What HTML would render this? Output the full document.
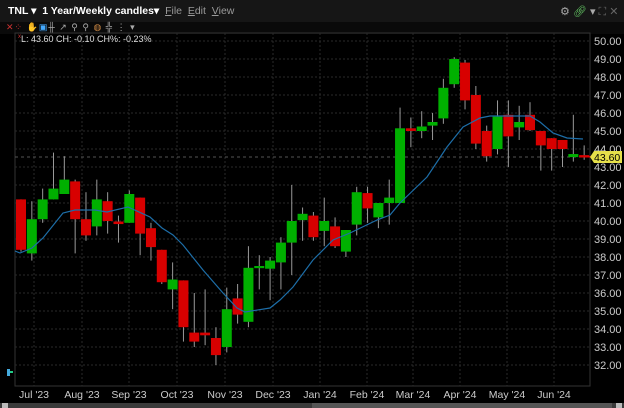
<!DOCTYPE html>
<html><head><meta charset="utf-8"><style>
html,body{margin:0;padding:0;background:#000;width:624px;height:408px;overflow:hidden;font-family:"Liberation Sans",sans-serif}
#top{position:absolute;left:0;top:0;width:624px;height:22px;background:#161616}
#tb{position:absolute;left:0;top:22px;width:624px;height:12px;background:#0a0a0a}
.t{position:absolute;white-space:nowrap}
</style></head><body>
<div id="top"></div><div id="tb"></div>
<div class="t" style="left:8px;top:5px;color:#fff;font-weight:bold;font-size:10.5px">TNL ▾&nbsp;&nbsp;1 Year/Weekly candles▾<span style="font-weight:normal;color:#9a9a9a;">&nbsp;&nbsp;<u>F</u>ile&nbsp;&nbsp;<u>E</u>dit&nbsp;&nbsp;<u>V</u>iew</span></div>
<div class="t" style="left:560px;top:5px;color:#aaa;font-size:11px">⚙ <span style="color:#6c6">🔗︎</span> ▾ <span style="color:#666">⛶ ✕</span></div>
<div class="t" style="left:6px;top:22px;font-size:9px;color:#aaa;letter-spacing:1px"><span style="color:#c33">✕</span><span style="color:#c33">⁘</span> ✋<span style="color:#4af">▣</span>╫ ↗ ⚲ ⚲ <span style="color:#c84">◍</span> ╬ ⋮ ▾</div>
<svg id="s" width="624" height="408" style="position:absolute;left:0;top:0"></svg>
<div class="t" style="left:18px;top:34px;font-size:9px;color:#ddd"><span style="color:#c33;font-size:6px;vertical-align:top">x</span>L: 43.60 CH: -0.10 CH%: -0.23%</div>
<script>
var s=document.getElementById('s'),h='';
function Y(p){return 59+(49-p)*18;}
h+='<rect x="15" y="33" width="575" height="353" fill="none" stroke="#333"/>';
for(var p=32;p<=50;p++){var y=Y(p);h+='<line x1="15" x2="590" y1="'+y+'" y2="'+y+'" stroke="#2a2a2a" stroke-dasharray="2,2"/>';h+='<text x="594" y="'+(y+4)+'" fill="#ccc" font-size="11" font-family="Liberation Sans">'+p+'.00</text>';}
var vx=[34,82,129,177,225,273,320,367,413,460,507,554];
var ml=["Jul '23","Aug '23","Sep '23","Oct '23","Nov '23","Dec '23","Jan '24","Feb '24","Mar '24","Apr '24","May '24","Jun '24"];
vx.forEach(function(x,i){h+='<line x1="'+x+'" x2="'+x+'" y1="33" y2="386" stroke="#2a2a2a" stroke-dasharray="2,2"/>';h+='<text x="'+x+'" y="398" fill="#ccc" font-size="10.5" text-anchor="middle" font-family="Liberation Sans">'+ml[i]+'</text>';});
var d=[[41.2,38.4,41.2,38.3,0],[40.1,38.2,41.1,37.8,1],[41.2,40.1,41.8,39.9,1],[41.8,41.2,43.8,41.2,1],[42.3,41.5,43.6,41.5,1],[42.2,40.1,42.3,38.2,0],[40.1,39.2,41.6,38.9,0],[41.2,39.7,42.3,39.2,1],[41.1,40.0,41.6,39.3,0],[39.97,39.83,40.3,38.8,0],[41.5,39.9,41.7,39.9,1],[41.3,39.3,41.3,38.1,0],[39.6,38.55,39.9,37.8,0],[38.4,36.6,38.4,36.5,0],[36.75,36.2,37.7,35.1,1],[36.7,34.1,36.7,33.3,0],[33.8,33.3,36.0,33.0,0],[33.8,33.65,36.2,33.1,0],[33.5,32.55,34.1,32.0,0],[35.1,33.0,36.3,32.7,1],[35.7,34.8,36.5,34.3,0],[37.4,34.4,38.6,34.1,1],[37.5,37.38,38.1,36.2,1],[37.8,37.35,38.0,35.6,1],[38.8,37.7,39.1,36.2,1],[40.0,38.8,42.0,37.0,1],[40.4,40.05,40.75,38.9,1],[40.3,39.1,40.5,38.9,0],[40.0,39.45,41.3,38.6,1],[39.7,38.6,40.2,38.5,0],[39.5,38.3,39.5,38.0,1],[41.6,39.8,41.9,39.2,1],[41.55,40.7,41.9,39.9,0],[41.0,40.2,41.0,39.6,1],[41.3,41.0,42.3,39.8,1],[45.15,41.0,46.3,41.0,1],[45.15,45.0,45.75,44.1,0],[45.25,45.0,46.1,44.6,1],[45.5,45.3,46.0,44.5,1],[47.4,45.7,47.9,45.4,1],[49.0,47.6,49.1,47.4,1],[48.8,46.7,48.95,46.2,0],[47.0,44.3,47.5,44.0,0],[45.0,43.6,45.3,43.3,0],[45.8,44.0,46.7,43.7,1],[45.9,44.7,46.7,43.0,0],[45.5,45.2,46.4,44.5,1],[45.9,45.05,46.6,45.0,0],[45.0,44.2,45.0,42.8,0],[44.6,44.0,44.6,42.8,0],[44.5,44.0,44.5,43.0,0],[43.72,43.55,45.9,43.3,1],[43.66,43.58,44.2,43.4,0]];
h+='<line x1="15" x2="590" y1="157" y2="157" stroke="#555" stroke-dasharray="3,3"/>';
d.forEach(function(c,i){var x=21+i*10.83;h+='<line x1="'+x+'" x2="'+x+'" y1="'+Y(c[2])+'" y2="'+Y(c[3])+'" stroke="#999"/>';var t=Y(c[0]),b=Y(c[1]);h+='<rect x="'+(x-5)+'" y="'+t+'" width="10" height="'+Math.max(2,b-t)+'" fill="'+(c[4]?'#00b000':'#d80000')+'"/>';});
var m=[[15,251],[20,253],[32,248],[43,238],[63,213],[75,210],[95,210],[107,212],[128,207],[150,217],[162,228],[173,235],[183,245],[203,270],[223,293],[237,308],[245,312],[270,308],[280,300],[293,287],[313,260],[333,240],[350,233],[377,220],[390,215],[400,203],[427,177],[447,147],[463,127],[480,118],[490,116],[530,116],[540,122],[553,133],[567,138],[583,139]];
h+='<polyline fill="none" stroke="#1d6ea8" stroke-width="1.2" points="'+m.map(function(a){return a.join(',')}).join(' ')+'"/>';
h+='<rect x="580" y="156" width="12" height="1.5" fill="#d00"/>';
h+='<path d="M590 157 L594 151 H622 V163 H594 Z" fill="#e6e04a"/><text x="594" y="161" font-size="10.5" fill="#000" font-family="Liberation Sans">43.60</text>';
h+='<rect x="7" y="369" width="3" height="7" fill="#4ad"/><rect x="10" y="371" width="3" height="2" fill="#2c8"/>';
h+='<rect x="0" y="403" width="624" height="5" fill="#3a3a3a"/><rect x="2" y="403" width="6" height="5" fill="#bbb"/><rect x="616" y="403" width="6" height="5" fill="#bbb"/><rect x="312" y="403" width="300" height="5" fill="#555"/>';
s.innerHTML=h;
</script>
</body></html>
